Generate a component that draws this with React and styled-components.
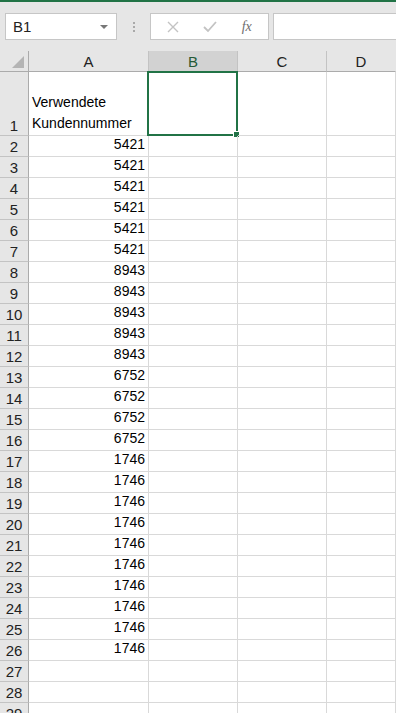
import React from 'react'
import styled, { createGlobalStyle } from 'styled-components'

const GlobalStyle = createGlobalStyle`
    html, body {
        margin:0;
        padding:0;
        background:#ffffff;
    }
    body {
        font-family:"Liberation Sans", Arial, sans-serif;
        overflow:hidden;
    }
`

const Window = styled.div`
    width:396px;
    height:713px;
    display:flex;
    flex-direction:column;
    overflow:hidden;
    background:#ffffff;
`

const TopStripe = styled.div`
    height:2px;
    background:#217346;
    flex-shrink:0;
`

const FormulaBar = styled.div`
    height:49px;
    flex-shrink:0;
    background:#e6e6e6;
    display:flex;
    align-items:flex-start;
    padding-top:11px;
    padding-left:5px;
    box-sizing:border-box;
`

const NameBox = styled.div`
    width:112px;
    height:27px;
    box-sizing:border-box;
    background:#fff;
    border:1px solid #c6c6c6;
    display:flex;
    align-items:center;
    justify-content:space-between;
    padding:0 8px 0 7px;
    font-size:15px;
    color:#222;
`

const DropArrow = styled.span`
    width:0;
    height:0;
    border-left:4px solid transparent;
    border-right:4px solid transparent;
    border-top:4px solid #777;
`

const Dots = styled.div`
    width:33px;
    height:27px;
    display:flex;
    flex-direction:column;
    align-items:center;
    justify-content:center;
    gap:2px;
`

const Dot = styled.span`
    width:2px;
    height:2px;
    background:#a9a9a9;
`

const IconBox = styled.div`
    width:119px;
    height:27px;
    box-sizing:border-box;
    background:#fff;
    border:1px solid #c6c6c6;
    display:flex;
    align-items:center;
    justify-content:space-around;
    padding:0 4px;
`

const Fx = styled.span`
    font-family:"Liberation Serif", "Times New Roman", serif;
    font-style:italic;
    font-size:14px;
    color:#6e6e6e;
`

const FormulaInput = styled.div`
    flex:1;
    height:27px;
    margin-left:4px;
    box-sizing:border-box;
    background:#fff;
    border:1px solid #c6c6c6;
    border-right:none;
`

const Sheet = styled.div`
    flex:1;
    display:grid;
    grid-template-columns:29px 120px 89px 89px 1fr;
    grid-template-rows:21px 64px;
    grid-auto-rows:21px;
    font-size:14px;
    color:#000;
`

const Corner = styled.div`
    background:#e6e6e6;
    border-right:1px solid #ababab;
    border-bottom:1px solid #ababab;
    box-sizing:border-box;
    display:flex;
    align-items:flex-end;
    justify-content:flex-end;
    padding:0 4px 3px 0;
`

const ColHead = styled.div`
    background:${p => (p.$active ? '#d2d2d2' : '#e6e6e6')};
    color:${p => (p.$active ? '#255a36' : '#222')};
    border-right:1px solid ${p => (p.$last ? 'transparent' : '#c3c3c3')};
    border-bottom:1px solid #ababab;
    box-sizing:border-box;
    display:flex;
    align-items:center;
    justify-content:center;
    font-size:15px;
`

const RowHead = styled.div`
    background:#e6e6e6;
    border-right:1px solid #ababab;
    border-bottom:1px solid #c3c3c3;
    box-sizing:border-box;
    display:flex;
    align-items:flex-end;
    justify-content:center;
    padding-bottom:1px;
    font-size:15px;
    color:#222;
`

const Cell = styled.div`
    position:relative;
    border-right:1px solid #d9d9d9;
    border-bottom:1px solid #d9d9d9;
    box-sizing:border-box;
    display:flex;
    align-items:flex-end;
    justify-content:${p => (p.$num ? 'flex-end' : 'flex-start')};
    padding:0 3px 1px 3px;
    line-height:21px;
    white-space:pre-line;
`

const Selection = styled.div`
    position:absolute;
    left:-2px;
    top:-1px;
    right:-1px;
    bottom:-1px;
    border:2px solid #217346;
    pointer-events:none;
`

const Handle = styled.span`
    position:absolute;
    right:-4px;
    bottom:-4px;
    width:5px;
    height:5px;
    background:#217346;
    border:1px solid #fff;
`

const values = [
    5421, 5421, 5421, 5421, 5421, 5421,
    8943, 8943, 8943, 8943, 8943,
    6752, 6752, 6752, 6752,
    1746, 1746, 1746, 1746, 1746, 1746, 1746, 1746, 1746, 1746,
]

const cols = ['A', 'B', 'C', 'D']

function App() {
    const rows = []
    for (let r = 2; r <= 29; r++) {
        const v = values[r - 2]
        rows.push(
            <React.Fragment key={r}>
                <RowHead>{r}</RowHead>
                <Cell $num>{v !== undefined ? v : ''}</Cell>
                <Cell />
                <Cell />
                <Cell />
            </React.Fragment>
        )
    }

    return (
        <>
            <GlobalStyle />
            <Window>
                <TopStripe />
                <FormulaBar>
                    <NameBox>
                        B1
                        <DropArrow />
                    </NameBox>
                    <Dots>
                        <Dot />
                        <Dot />
                        <Dot />
                    </Dots>
                    <IconBox>
                        <svg width="12" height="12" viewBox="0 0 12 12">
                            <path d="M1 1 L11 11 M11 1 L1 11" stroke="#c3c3c3" strokeWidth="1.4" fill="none" />
                        </svg>
                        <svg width="14" height="12" viewBox="0 0 14 12">
                            <path d="M1 6 L5 10 L13 1" stroke="#c3c3c3" strokeWidth="1.8" fill="none" />
                        </svg>
                        <Fx>fx</Fx>
                    </IconBox>
                    <FormulaInput />
                </FormulaBar>
                <Sheet>
                    <Corner>
                        <svg width="12" height="12" viewBox="0 0 12 12">
                            <polygon points="12,0 12,12 0,12" fill="#b4b4b4" />
                        </svg>
                    </Corner>
                    {cols.map((c, i) => (
                        <ColHead key={c} $active={c === 'B'} $last={i === cols.length - 1}>{c}</ColHead>
                    ))}
                    <RowHead>1</RowHead>
                    <Cell>{'Verwendete\nKundennummer'}</Cell>
                    <Cell>
                        <Selection>
                            <Handle />
                        </Selection>
                    </Cell>
                    <Cell />
                    <Cell />
                    {rows}
                </Sheet>
            </Window>
        </>
    )
}

export default App
